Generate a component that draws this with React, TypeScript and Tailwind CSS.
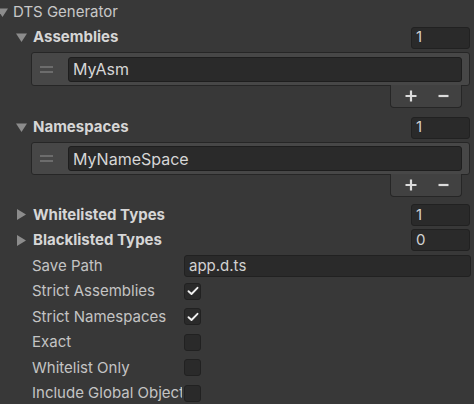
import React from "react";

const font = { fontFamily: "Inter, 'Noto Sans', sans-serif" };

function Tri({ open, className = "" }: { open: boolean; className?: string }) {
  return (
    <svg width="11" height="11" viewBox="0 0 11 11" className={className}>
      {open ? <polygon points="0,1.5 11,1.5 5.5,10" fill="#8c8c8c" /> : <polygon points="1,0 10,5.5 1,11" fill="#8c8c8c" />}
    </svg>
  );
}

function Field({ value, className = "" }: { value: string; className?: string }) {
  return (
    <div className={`h-[22px] rounded-[3px] bg-[#2a2a2a] border border-[#212121] pl-[4px] flex items-center text-[15px] text-[#d2d2d2] ${className}`}>
      {value}
    </div>
  );
}

function Check({ on }: { on: boolean }) {
  return (
    <div className="w-[17px] h-[17px] rounded-[3px] bg-[#2a2a2a] border border-[#212121] flex items-center justify-center">
      {on && (
        <svg width="12" height="10" viewBox="0 0 12 10">
          <path d="M1.5 5.2 L4.5 8 L10.5 1.8" stroke="#f0f0f0" strokeWidth="1.9" fill="none" strokeLinecap="round" strokeLinejoin="round" />
        </svg>
      )}
    </div>
  );
}

function ListBlock({ title, item, boxH }: { title: string; item: string; boxH: string }) {
  return (
    <div>
      <div className="h-[25px] flex items-center">
        <Tri open className="ml-[16px] mr-[6px]" />
        <span className="font-bold text-[15px] text-[#d6d6d6] flex-1">{title}</span>
        <Field value="1" className="w-[59px] mr-[4px]" />
      </div>
      <div className={`ml-[31px] mr-[4px] mt-[2px] ${boxH} rounded-[3px] bg-[#474747] border border-[#262626] flex items-center`}>
        <div className="w-[36px] flex flex-col items-center gap-[3px] pr-[8px]">
          <div className="w-[13px] h-[2px] bg-[#6c6c6c]" />
          <div className="w-[13px] h-[2px] bg-[#6c6c6c]" />
        </div>
        <div className="flex-1 h-[25px] mr-[7px] rounded-[3px] bg-[#2a2a2a] border border-[#1e1e1e] pl-[4px] flex items-center text-[16px] text-[#d6d6d6]">
          {item}
        </div>
      </div>
      <div className="flex justify-end pr-[12px]">
        <div className="w-[72px] h-[23px] -mt-px rounded-b-[4px] bg-[#414141] border border-t-0 border-[#262626] flex items-center pl-[14px] text-[#dcdcdc]">
          <svg width="12" height="12" viewBox="0 0 12 12">
            <path d="M6 0.5 V11.5 M0.5 6 H11.5" stroke="#dcdcdc" strokeWidth="2.2" />
          </svg>
          <svg width="11" height="12" viewBox="0 0 11 12" className="ml-[21px]">
            <path d="M0.5 6 H10.5" stroke="#dcdcdc" strokeWidth="2.2" />
          </svg>
        </div>
      </div>
    </div>
  );
}

function Row({ label, children }: { label: string; children: React.ReactNode }) {
  return (
    <div className="h-[25.5px] flex items-center">
      <div className="ml-[32px] w-[150px] overflow-hidden whitespace-nowrap text-[15px] text-[#c4c4c4]">{label}</div>
      <div className="ml-[2px] flex-1 mr-[3px]">{children}</div>
    </div>
  );
}

export default function App() {
  return (
    <div className="w-[474px] h-[404px] bg-[#383838] overflow-hidden" style={font}>
      {/* Header */}
      <div className="h-[25px] flex items-center">
        <Tri open className="-ml-[3px] mr-[5px]" />
        <span className="text-[15px] text-[#c8c8c8]">DTS Generator</span>
      </div>

      <ListBlock title="Assemblies" item="MyAsm" boxH="h-[34px]" />

      <div className="mt-[7px]">
        <ListBlock title="Namespaces" item="MyNameSpace" boxH="h-[33px]" />
      </div>

      <div className="mt-[5px]">
        <div className="h-[25.5px] flex items-center">
          <Tri open={false} className="ml-[16px] mr-[6px]" />
          <span className="font-bold text-[15px] text-[#d6d6d6] flex-1">Whitelisted Types</span>
          <Field value="1" className="w-[59px] mr-[4px]" />
        </div>
        <div className="h-[25.5px] flex items-center">
          <Tri open={false} className="ml-[16px] mr-[6px]" />
          <span className="font-bold text-[15px] text-[#d6d6d6] flex-1">Blacklisted Types</span>
          <Field value="0" className="w-[59px] mr-[4px]" />
        </div>
        <Row label="Save Path">
          <Field value="app.d.ts" />
        </Row>
        <Row label="Strict Assemblies">
          <Check on />
        </Row>
        <Row label="Strict Namespaces">
          <Check on />
        </Row>
        <Row label="Exact">
          <Check on={false} />
        </Row>
        <Row label="Whitelist Only">
          <Check on={false} />
        </Row>
        <Row label="Include Global Objects">
          <Check on={false} />
        </Row>
      </div>
    </div>
  );
}
